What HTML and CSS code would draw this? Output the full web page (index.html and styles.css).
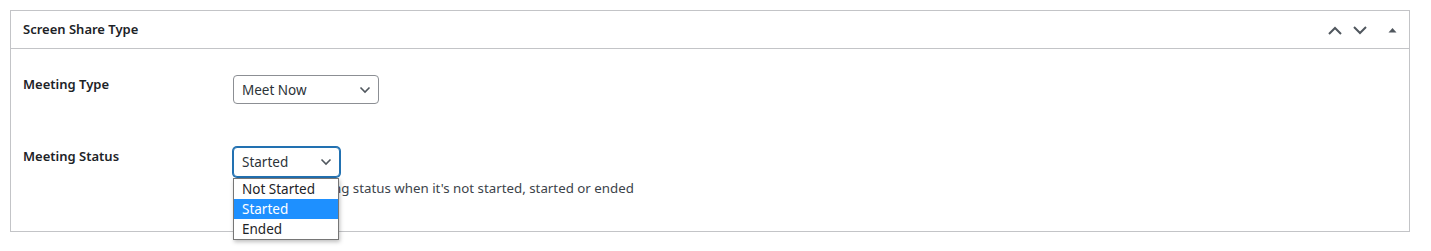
FILE: index.html
```html
<!DOCTYPE html>
<html>
<head>
<meta charset="utf-8">
<link rel="stylesheet" href="styles.css">
</head>
<body>
<div class="postbox">
  <div class="postbox-header">
    <h2 class="title">Screen Share Type</h2>
    <div class="actions">
      <svg class="ico" width="14" height="9" viewBox="0 0 14 9"><path d="M1 8 L7 2 L13 8" fill="none" stroke="#50575e" stroke-width="2"/></svg>
      <svg class="ico" width="14" height="9" viewBox="0 0 14 9"><path d="M1 1 L7 7 L13 1" fill="none" stroke="#50575e" stroke-width="2"/></svg>
      <svg class="ico tri" width="9" height="6" viewBox="0 0 9 6"><path d="M0.5 5.5 L4.5 1 L8.5 5.5 Z" fill="#50575e"/></svg>
    </div>
  </div>
  <div class="inside">
    <div class="row row-first">
      <div class="label">Meeting Type</div>
      <div class="field">
        <div class="select select-wide">
          <span>Meet Now</span>
          <svg width="12" height="8" viewBox="0 0 12 8"><path d="M1.5 1.5 L6 6 L10.5 1.5" fill="none" stroke="#50575e" stroke-width="1.6"/></svg>
        </div>
      </div>
    </div>
    <div class="row row-second">
      <div class="label">Meeting Status</div>
      <div class="field">
        <div class="select-wrap">
          <div class="select select-narrow focused">
            <span>Started</span>
            <svg width="12" height="8" viewBox="0 0 12 8"><path d="M1.5 1.5 L6 6 L10.5 1.5" fill="none" stroke="#50575e" stroke-width="1.6"/></svg>
          </div>
          <ul class="dropdown">
            <li>Not Started</li>
            <li class="active">Started</li>
            <li>Ended</li>
          </ul>
        </div>
        <p class="description">Select the meeting status when it's not started, started or ended</p>
      </div>
    </div>
  </div>
</div>
</body>
</html>
```

FILE: styles.css
```css
* { box-sizing: border-box; }
html, body { margin: 0; padding: 0; background: #ffffff; }
body {
  padding: 10px 21px 0 10px;
  min-height: 251px;
  font-family: "Noto Sans", "Open Sans", sans-serif;
  color: #1d2327;
}
.postbox {
  border: 1px solid #c3c4c7;
  background: #fff;
  height: 222px;
}
.postbox-header {
  height: 38px;
  border-bottom: 1px solid #c3c4c7;
  display: flex;
  align-items: center;
  justify-content: space-between;
  padding: 0 12px;
}
.title {
  margin: 0;
  font-size: 13px;
  font-weight: 600;
  line-height: 1.4;
  color: #1d2327;
}
.actions {
  display: flex;
  align-items: center;
  gap: 11px;
  padding-top: 1px;
}
.ico { display: block; }
.tri { margin-left: 10px; }
.inside { padding: 0 12px; }
.row { display: flex; align-items: flex-start; }
.row-first { padding-top: 26px; height: 98px; }
.label {
  width: 210px;
  font-size: 13px;
  font-weight: 600;
  line-height: 18px;
}
.field { font-size: 13px; }
.select {
  height: 30px;
  border: 1px solid #8c8f94;
  border-radius: 4px;
  display: flex;
  align-items: center;
  justify-content: space-between;
  padding: 0 7px 0 8px;
  font-size: 13.5px;
  color: #2c3338;
  background: #fff;
}
.row-first .select { height: 29px; }
.select-wide { width: 146px; }
.select-narrow { width: 107px; }
.focused {
  border-color: #2271b1;
  box-shadow: 0 0 0 1px #2271b1;
}
.select-wrap { position: relative; width: 107px; }
.dropdown {
  position: absolute;
  top: 31px;
  left: 0;
  width: 106px;
  margin: 0;
  padding: 0;
  list-style: none;
  background: #fff;
  border: 1px solid #767676;
  box-shadow: 1px 2px 4px rgba(0,0,0,0.25);
  z-index: 2;
}
.dropdown li {
  height: 20px;
  line-height: 20px;
  padding-left: 8px;
  font-size: 13.5px;
  color: #1d2327;
}
.dropdown li.active { background: #1e90ff; color: #fff; }
.description {
  margin: 1px 0 0 0;
  font-size: 13.3px;
  line-height: 20px;
  color: #3c434a;
}
```
